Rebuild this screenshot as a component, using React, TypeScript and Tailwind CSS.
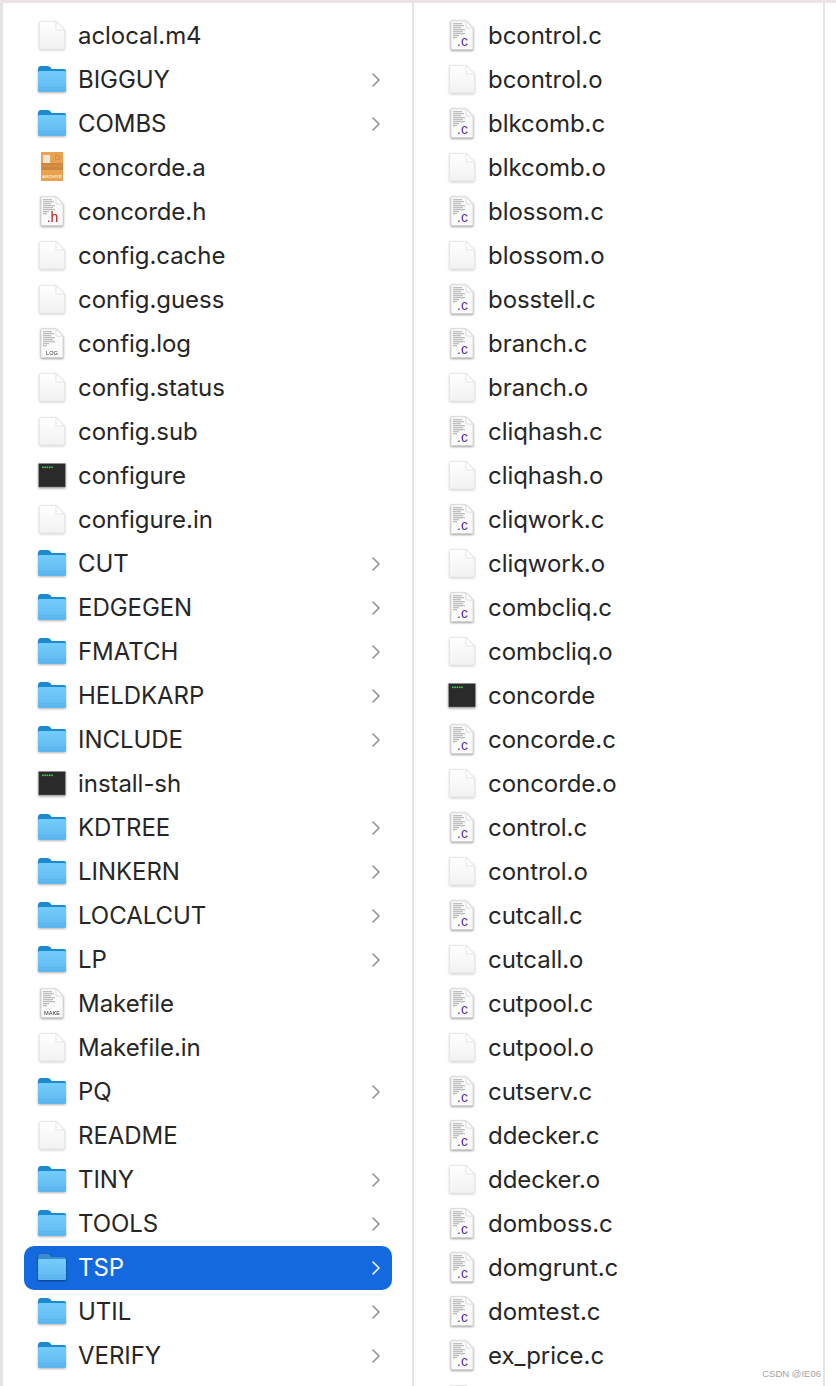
import * as React from "react";

// --- Types ---
type Kind = "blank" | "folder" | "archive" | "h" | "c" | "log" | "make" | "exec";

interface Entry {
  name: string;
  kind: Kind;
  selected?: boolean;
}

// --- Data ---
const leftEntries: Entry[] = [
  { name: "aclocal.m4", kind: "blank" },
  { name: "BIGGUY", kind: "folder" },
  { name: "COMBS", kind: "folder" },
  { name: "concorde.a", kind: "archive" },
  { name: "concorde.h", kind: "h" },
  { name: "config.cache", kind: "blank" },
  { name: "config.guess", kind: "blank" },
  { name: "config.log", kind: "log" },
  { name: "config.status", kind: "blank" },
  { name: "config.sub", kind: "blank" },
  { name: "configure", kind: "exec" },
  { name: "configure.in", kind: "blank" },
  { name: "CUT", kind: "folder" },
  { name: "EDGEGEN", kind: "folder" },
  { name: "FMATCH", kind: "folder" },
  { name: "HELDKARP", kind: "folder" },
  { name: "INCLUDE", kind: "folder" },
  { name: "install-sh", kind: "exec" },
  { name: "KDTREE", kind: "folder" },
  { name: "LINKERN", kind: "folder" },
  { name: "LOCALCUT", kind: "folder" },
  { name: "LP", kind: "folder" },
  { name: "Makefile", kind: "make" },
  { name: "Makefile.in", kind: "blank" },
  { name: "PQ", kind: "folder" },
  { name: "README", kind: "blank" },
  { name: "TINY", kind: "folder" },
  { name: "TOOLS", kind: "folder" },
  { name: "TSP", kind: "folder", selected: true },
  { name: "UTIL", kind: "folder" },
  { name: "VERIFY", kind: "folder" },
];

const rightEntries: Entry[] = [
  { name: "bcontrol.c", kind: "c" },
  { name: "bcontrol.o", kind: "blank" },
  { name: "blkcomb.c", kind: "c" },
  { name: "blkcomb.o", kind: "blank" },
  { name: "blossom.c", kind: "c" },
  { name: "blossom.o", kind: "blank" },
  { name: "bosstell.c", kind: "c" },
  { name: "branch.c", kind: "c" },
  { name: "branch.o", kind: "blank" },
  { name: "cliqhash.c", kind: "c" },
  { name: "cliqhash.o", kind: "blank" },
  { name: "cliqwork.c", kind: "c" },
  { name: "cliqwork.o", kind: "blank" },
  { name: "combcliq.c", kind: "c" },
  { name: "combcliq.o", kind: "blank" },
  { name: "concorde", kind: "exec" },
  { name: "concorde.c", kind: "c" },
  { name: "concorde.o", kind: "blank" },
  { name: "control.c", kind: "c" },
  { name: "control.o", kind: "blank" },
  { name: "cutcall.c", kind: "c" },
  { name: "cutcall.o", kind: "blank" },
  { name: "cutpool.c", kind: "c" },
  { name: "cutpool.o", kind: "blank" },
  { name: "cutserv.c", kind: "c" },
  { name: "ddecker.c", kind: "c" },
  { name: "ddecker.o", kind: "blank" },
  { name: "domboss.c", kind: "c" },
  { name: "domgrunt.c", kind: "c" },
  { name: "domtest.c", kind: "c" },
  { name: "ex_price.c", kind: "c" },
  // only the top of this icon shows at the bottom edge
  { name: "", kind: "blank" },
];

// --- Icons ---
const BlankDoc = () => (
  <svg
    width="32"
    height="32"
    viewBox="0 0 32 32"
    className="drop-shadow-[0_1px_1px_rgba(0,0,0,0.18)]"
  >
    <path
      d="M5 1.5H20L28.5 10V28Q28.5 29 27.5 29H4.5Q3.5 29 3.5 28V3Q3.5 1.5 5 1.5Z"
      fill="url(#doc-fill)"
      stroke="#e8e8e8"
      strokeWidth="1"
    />
    <path d="M20 1.5V10H28.5Z" fill="#ffffff" stroke="#dedede" strokeWidth="0.8" strokeLinejoin="round" />
  </svg>
);

const TextLines = () => (
  <g fill="#bdbdbd">
    <rect x="7" y="3" width="9" height="1.3" />
    <rect x="7" y="5" width="11" height="1.3" />
    <rect x="7" y="7" width="8" height="1.3" />
    <rect x="7" y="9" width="12" height="1.3" />
    <rect x="7" y="11" width="10" height="1.3" />
    <rect x="7" y="13" width="12" height="1.3" />
    <rect x="7" y="15" width="6" height="1.3" />
    <rect x="7" y="17" width="4" height="1.3" />
  </g>
);

// document with a printed preview, a bit narrower than the blank one
const TextDoc = ({ children }: { children?: React.ReactNode }) => (
  <svg
    width="32"
    height="32"
    viewBox="0 0 32 32"
    className="drop-shadow-[0_1px_1px_rgba(0,0,0,0.4)]"
  >
    <path d="M5 0.8H20L27 8V29.5H5Z" fill="#fbfbfb" stroke="#d4d4d4" strokeWidth="0.8" />
    <path d="M20 0.8V8H27Z" fill="#ffffff" stroke="#cfcfcf" strokeWidth="0.7" strokeLinejoin="round" />
    <TextLines />
    {children}
  </svg>
);

const FolderIcon = ({ selected }: { selected?: boolean }) => (
  <svg
    width="32"
    height="32"
    viewBox="0 0 32 32"
    className={
      selected
        ? "drop-shadow-[0_1px_1px_rgba(0,0,0,0.45)]"
        : "drop-shadow-[0_1px_1px_rgba(0,0,0,0.3)]"
    }
  >
    <path
      d="M2 6Q2 2 5 2H11.5Q13.5 2 14.5 3.5L15.5 5H28Q30 5 30 7V12H2Z"
      fill={selected ? "#3a8ccb" : "#1b8ad0"}
    />
    <rect x="2" y="7" width="28" height="21" rx="1.5" fill="url(#folder-fill)" />
    <rect x="2" y="23.5" width="28" height="0.7" fill="#58aee6" />
    <rect x="2" y="25.7" width="28" height="0.7" fill="#58aee6" />
  </svg>
);

const ExecIcon = () => (
  <svg
    width="32"
    height="32"
    viewBox="0 0 32 32"
    className="drop-shadow-[0_1px_1px_rgba(0,0,0,0.35)]"
  >
    <rect x="2.3" y="3.3" width="27.4" height="24" rx="1" fill="#2a2a2a" stroke="#c9c9c9" strokeWidth="0.6" />
    <g fill="#3ecf57">
      <rect x="6" y="6.5" width="1.6" height="1.6" />
      <rect x="8.3" y="6.5" width="1.6" height="1.6" />
      <rect x="10.6" y="6.5" width="1.6" height="1.6" />
      <rect x="12.9" y="6.5" width="1.6" height="1.6" />
      <rect x="15.2" y="6.5" width="1.6" height="1.6" />
    </g>
  </svg>
);

const ArchiveIcon = () => (
  <svg width="32" height="32" viewBox="0 0 32 32">
    <rect x="5" y="0" width="22" height="29" fill="#e9a24f" />
    <rect x="5" y="11" width="22" height="7" fill="#cd873f" />
    <rect x="5" y="13.5" width="22" height="1" fill="#dd9848" />
    <rect x="7" y="3" width="7" height="8" fill="#efe6da" />
    <rect x="19.5" y="3.5" width="4" height="4" fill="none" stroke="#cf8a43" strokeWidth="0.8" />
    <text
      x="16"
      y="25.5"
      textAnchor="middle"
      fontSize="4.4"
      fontWeight="700"
      fill="#fbeedd"
      fontFamily="'Liberation Sans', sans-serif"
    >
      ARCHIVE
    </text>
  </svg>
);

const FileIcon = ({ kind, selected }: { kind: Kind; selected?: boolean }) => {
  switch (kind) {
    case "folder":
      return <FolderIcon selected={selected} />;
    case "exec":
      return <ExecIcon />;
    case "archive":
      return <ArchiveIcon />;
    case "c":
    case "h":
      return (
        <TextDoc>
          <text
            x="16.5"
            y="25.5"
            textAnchor="middle"
            fontSize="14"
            fontWeight="500"
            fontFamily="'Liberation Sans', sans-serif"
            fill={kind === "c" ? "#5a28ab" : "#b5201c"}
          >
            {kind === "c" ? ".c" : ".h"}
          </text>
        </TextDoc>
      );
    case "log":
    case "make":
      return (
        <TextDoc>
          <text
            x="16"
            y="26.5"
            textAnchor="middle"
            fontSize="5.6"
            fontFamily="'Liberation Sans', sans-serif"
            fill="#333333"
          >
            {kind === "log" ? "LOG" : "MAKE"}
          </text>
        </TextDoc>
      );
    default:
      return <BlankDoc />;
  }
};

const Chevron = ({ selected }: { selected?: boolean }) => (
  <svg width="10" height="16" viewBox="0 0 10 16" fill="none">
    <path
      d="M2 2L8 8L2 14"
      stroke={selected ? "#ffffff" : "#8e8e8e"}
      strokeWidth="1.5"
      strokeLinecap="round"
      strokeLinejoin="round"
    />
  </svg>
);

// --- Rows ---
const Row = ({ entry }: { entry: Entry }) => (
  <div
    className={`flex h-[44px] items-center gap-[10px] rounded-[10px] pl-[12px] pr-[11px] ${
      entry.selected ? "bg-[#1469df] text-white" : "text-[#262626]"
    }`}
  >
    <FileIcon kind={entry.kind} selected={entry.selected} />
    <span className="flex-1 text-[24px] leading-none tracking-[-0.05px]">{entry.name}</span>
    {entry.kind === "folder" && <Chevron selected={entry.selected} />}
  </div>
);

const Column = ({ entries, className }: { entries: Entry[]; className: string }) => (
  <div className={`border-r-2 border-[#e4e4e4] pt-[11px] pr-[20px] ${className}`}>
    {entries.map((entry) => (
      <Row key={entry.name} entry={entry} />
    ))}
  </div>
);

export default function App() {
  return (
    <div className="relative h-[1386px] w-[836px] overflow-hidden bg-white font-['Inter','Liberation_Sans',sans-serif]">
      <svg width="0" height="0" className="block">
        <defs>
          <linearGradient id="doc-fill" x1="0" y1="0" x2="0" y2="1">
            <stop offset="0" stopColor="#ffffff" />
            <stop offset="1" stopColor="#f1f1f1" />
          </linearGradient>
          <linearGradient id="folder-fill" x1="0" y1="0" x2="0" y2="1">
            <stop offset="0" stopColor="#74ccfb" />
            <stop offset="1" stopColor="#5fb9f0" />
          </linearGradient>
        </defs>
      </svg>
      <div className="h-[3px] bg-[#e8e4e8]" />
      <div className="flex border-l-[3px] border-[#e4e4e4]">
        <Column entries={leftEntries} className="w-[411px] pl-[21px]" />
        <Column entries={rightEntries} className="w-[411px] pl-[20px]" />
      </div>
      <span className="absolute bottom-[8px] right-[15px] font-['Liberation_Sans',sans-serif] text-[9.5px] leading-none text-[#a3a3a3]">
        CSDN @IE06
      </span>
    </div>
  );
}
